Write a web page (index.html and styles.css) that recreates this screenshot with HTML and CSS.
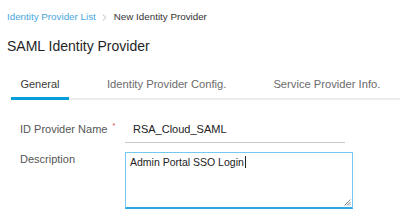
FILE: index.html
```html
<!DOCTYPE html>
<html>
<head>
<meta charset="utf-8">
<link rel="stylesheet" href="styles.css">
</head>
<body>
<div class="page">
  <nav class="crumbs">
    <a class="crumb-link">Identity Provider List</a>
    <svg class="sep" width="5" height="7" viewBox="0 0 5 7"><path d="M0.7 0.5 L4 3.5 L0.7 6.5" fill="none" stroke="#b5b5b5" stroke-width="0.9"/></svg>
    <span class="crumb-current">New Identity Provider</span>
  </nav>
  <h1 class="title">SAML Identity Provider</h1>
  <div class="tabs">
    <div class="tab active">General</div>
    <div class="tab">Identity Provider Config.</div>
    <div class="tab">Service Provider Info.</div>
  </div>
  <div class="form">
    <div class="row">
      <label class="label">ID Provider Name<span class="req">*</span></label>
      <div class="input">RSA_Cloud_SAML</div>
    </div>
    <div class="row">
      <label class="label">Description</label>
      <div class="textarea"><span>Admin Portal SSO Login</span><span class="caret"></span>
        <svg class="grip" width="7" height="7" viewBox="0 0 7 7"><path d="M0.5 6.5 L6.5 0.5 M3 6.5 L6.5 3 M5.2 6.5 L6.5 5.2" stroke="#777" stroke-width="0.9"/></svg>
      </div>
    </div>
  </div>
</div>
</body>
</html>
```

FILE: styles.css
```css
html, body {
  margin: 0;
  padding: 0;
  background: #fff;
}
body {
  font-family: "Liberation Sans", Arial, sans-serif;
  color: #333;
  width: 400px;
  height: 221px;
  overflow: hidden;
}
.page {
  padding: 11px 0 0 7px;
}
.crumbs {
  display: flex;
  align-items: center;
  font-size: 9.8px;
  line-height: 12px;
  height: 12px;
}
.crumb-link {
  color: #47a8dc;
}
.sep {
  margin: 0 7px 0 6px;
  position: relative;
  top: 0.5px;
}
.crumb-current {
  color: #333;
}
.title {
  margin: 14px 0 0 0;
  font-size: 14px;
  font-weight: normal;
  color: #1f1f1f;
  line-height: 18px;
  height: 18px;
}
.tabs {
  display: flex;
  align-items: flex-start;
  gap: 29px;
  margin: 14px 0 0 4px;
  border-bottom: 2px solid #ececec;
  height: 29px;
}
.tab {
  font-size: 11.2px;
  color: #6b6b6b;
  line-height: 14px;
  padding: 8px 9px 0 9px;
  height: 28px;
  box-sizing: border-box;
}
.tab.active {
  color: #3a3a3a;
  font-size: 11px;
  height: 31px;
  border-bottom: 3px solid #049fd9;
  width: 58px;
  padding-left: 0;
  padding-right: 0;
  text-align: center;
}
.form {
  margin-top: 22px;
  padding-left: 13px;
  display: flex;
  flex-direction: column;
  gap: 9px;
}
.row {
  display: flex;
  align-items: flex-start;
}
.label {
  width: 105px;
  font-size: 11px;
  color: #565656;
  line-height: 14px;
  flex: none;
}
.req {
  color: #e0383f;
  font-size: 7px;
  margin-left: 5px;
  position: relative;
  top: -5px;
}
.input {
  width: 220px;
  border-bottom: 1px solid #c9c9c9;
  font-size: 11px;
  color: #222;
  line-height: 14px;
  padding: 0 0 6px 8px;
  box-sizing: border-box;
}
.textarea {
  position: relative;
  width: 228px;
  height: 57px;
  box-sizing: border-box;
  border: 1px solid #74c9ef;
  border-bottom: 2px solid #2aa9e2;
  font-size: 10.5px;
  color: #222;
  line-height: 14px;
  padding: 1.5px 4px;
  display: flex;
  align-items: flex-start;
}
.caret {
  display: inline-block;
  width: 1px;
  height: 12px;
  background: #222;
  margin: 1px 0 0 1px;
}
.grip {
  position: absolute;
  right: 1px;
  bottom: 1px;
}
```
